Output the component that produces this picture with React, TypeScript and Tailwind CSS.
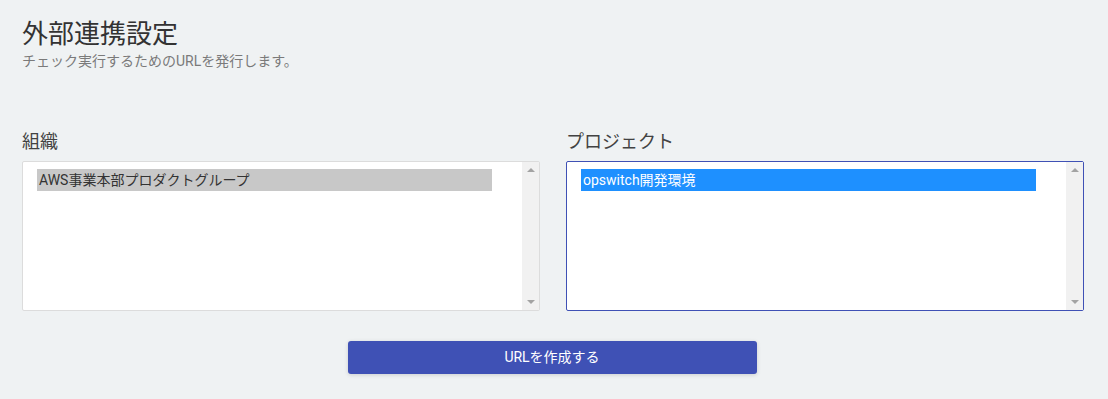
import React from "react";

const font = { fontFamily: '"Roboto", "Noto Sans CJK JP", sans-serif' };

function Scrollbar() {
  return (
    <div className="w-[17px] bg-[#f1f1f1] flex flex-col items-center justify-between py-[6px]">
      <div className="w-0 h-0 border-l-[4px] border-r-[4px] border-b-[4px] border-l-transparent border-r-transparent border-b-[#a3a3a3]" />
      <div className="w-0 h-0 border-l-[4px] border-r-[4px] border-t-[4px] border-l-transparent border-r-transparent border-t-[#a3a3a3]" />
    </div>
  );
}

function ListBox({
  label,
  item,
  focused,
}: {
  label: string;
  item: string;
  focused: boolean;
}) {
  return (
    <div className="flex flex-col">
      <div className="text-[18px] leading-[24px] text-[#424242] h-[24px] mt-[5px]">{label}</div>
      <div
        className={
          "mt-[7px] h-[150px] rounded-[2px] bg-white flex border " +
          (focused ? "border-[#3f51b5]" : "border-[#dcdcdc]")
        }
      >
        <div className="flex-1 pt-[7px]">
          <div
            className={
              "ml-[14px] mr-[30px] h-[22px] pl-[2px] text-[14px] leading-[22px] " +
              (focused ? "bg-[#1e90ff] text-white" : "bg-[#c8c8c8] text-[#333]")
            }
          >
            {item}
          </div>
        </div>
        <Scrollbar />
      </div>
    </div>
  );
}

export default function App() {
  return (
    <div className="w-[1108px] h-[399px] bg-[#eff2f3] pl-[22px] pr-[24px] pt-[18px]" style={font}>
      <h1 className="text-[26px] leading-[32px] text-[#333]">外部連携設定</h1>
      <p className="text-[14px] leading-[18px] text-[#7a7a7a] mt-[2px]">
        チェック実行するためのURLを発行します。
      </p>
      <div className="grid grid-cols-2 gap-x-[26px] mt-[55px]">
        <ListBox label="組織" item="AWS事業本部プロダクトグループ" focused={false} />
        <ListBox label="プロジェクト" item="opswitch開発環境" focused={true} />
      </div>
      <div className="flex justify-center mt-[30px] pr-[2px]">
        <button className="w-[409px] h-[33px] rounded-[3px] bg-[#3f51b5] text-white text-[14px] shadow-[0_1px_4px_rgba(0,0,0,0.15)]">
          URLを作成する
        </button>
      </div>
    </div>
  );
}
